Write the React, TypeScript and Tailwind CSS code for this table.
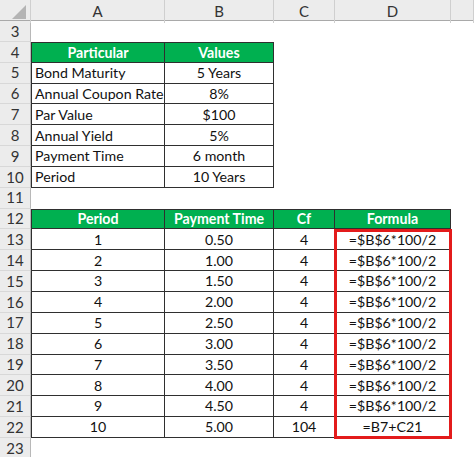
const cols = 'grid grid-cols-[31px_134px_109px_61px_116px_1fr]'
const rowH = 'h-[20.85px]'

const info: [string, string][] = [
  ['Bond Maturity', '5 Years'],
  ['Annual Coupon Rate', '8%'],
  ['Par Value', '$100'],
  ['Annual Yield', '5%'],
  ['Payment Time', '6 month'],
  ['Period', '10 Years'],
]

const periods = Array.from({ length: 10 }, (_, i) => ({
  period: String(i + 1),
  time: ((i + 1) * 0.5).toFixed(2),
  cf: i === 9 ? '104' : '4',
  formula: i === 9 ? '=B7+C21' : '=$B$6*100/2',
}))

function RowNum({ n }: { n: number }) {
  return (
    <div className={`${rowH} flex items-center justify-center bg-[#ececec] border-r border-r-[#b8b8b8] border-b border-b-[#d8d8d8] text-[#333] text-[15px]`}>
      {n}
    </div>
  )
}

export default function App() {
  return (
    <div className="w-[474px] h-[457px] overflow-hidden bg-white text-[14.2px] text-[#111]" style={{ fontFamily: 'Lato, "Open Sans", sans-serif' }}>
      {/* column letters */}
      <div className={`${cols} h-[21px] bg-[#ececec] border-b border-[#a9a9a9] text-[#333] text-[15px]`}>
        <div className="relative border-r border-[#cfcfcf]">
          <div className="absolute right-[4px] bottom-[4px] w-0 h-0 border-l-[14px] border-l-transparent border-b-[14px] border-b-[#b4b4b4]" />
        </div>
        {['A', 'B', 'C', 'D', ''].map((c, i) => (
          <div key={i} className="flex items-center justify-center border-r border-[#cfcfcf]">{c}</div>
        ))}
      </div>

      {/* row 3 */}
      <div className={cols}>
        <RowNum n={3} />
      </div>

      {/* particulars table */}
      <div className={cols}>
        <RowNum n={4} />
        <div className={`${rowH} flex items-center justify-center bg-[#00b050] text-white font-bold border border-[#2f2f2f]`}>Particular</div>
        <div className={`${rowH} flex items-center justify-center bg-[#00b050] text-white font-bold border-y border-r border-[#2f2f2f]`}>Values</div>
      </div>
      {info.map(([k, v], i) => (
        <div key={k} className={cols}>
          <RowNum n={5 + i} />
          <div className={`${rowH} flex items-center pl-[3px] border-x border-b border-[#2f2f2f] whitespace-nowrap`}>{k}</div>
          <div className={`${rowH} flex items-center justify-center border-r border-b border-[#2f2f2f]`}>{v}</div>
        </div>
      ))}

      {/* row 11 */}
      <div className={cols}>
        <RowNum n={11} />
      </div>

      {/* cash flow table */}
      <div className="relative">
        <div className={cols}>
          <RowNum n={12} />
          {['Period', 'Payment Time', 'Cf', 'Formula'].map((h, i) => (
            <div
              key={h}
              className={`${rowH} flex items-center justify-center bg-[#00b050] text-white font-bold border-y border-r border-[#2f2f2f] ${i === 0 ? 'border-l' : ''}`}
            >
              {h}
            </div>
          ))}
        </div>
        {periods.map((p, i) => (
          <div key={p.period} className={cols}>
            <RowNum n={13 + i} />
            <div className={`${rowH} flex items-center justify-center border-x border-b border-[#2f2f2f]`}>{p.period}</div>
            <div className={`${rowH} flex items-center justify-center border-r border-b border-[#2f2f2f]`}>{p.time}</div>
            <div className={`${rowH} flex items-center justify-center border-r border-b border-[#2f2f2f]`}>{p.cf}</div>
            <div className={`${rowH} flex items-center justify-center border-r border-b border-[#2f2f2f]`}>{p.formula}</div>
          </div>
        ))}
        {/* red highlight around formulas */}
        <div className="absolute left-[334px] top-[20px] w-[118px] h-[210px] border-[3px] border-[#e31b1b] pointer-events-none" />
      </div>

      <div className={cols}>
        <RowNum n={23} />
      </div>
    </div>
  )
}
